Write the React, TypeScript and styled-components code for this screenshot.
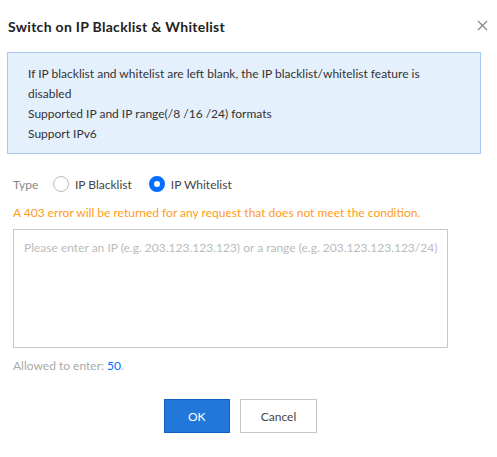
import { useState } from 'react'
import styled, { createGlobalStyle } from 'styled-components'

const GlobalStyle = createGlobalStyle`
  body {
    margin: 0;
    background: #fff;
    font-family: Lato, "Liberation Sans", sans-serif;
    font-size: 12px;
    color: #444;
  }
`

const Dialog = styled.div`
  position: relative;
  width: 497px;
  height: 457px;
  box-sizing: border-box;
  padding: 0 16px 0 7px;
`

const Header = styled.div`
  height: 52px;
  display: flex;
  align-items: center;
  padding-left: 1px;
`

const Title = styled.h2`
  margin: 0;
  font-size: 14px;
  font-weight: 700;
  letter-spacing: 0.3px;
  color: #222;
`

const Close = styled.button`
  position: absolute;
  top: 18px;
  right: 8px;
  width: 14px;
  height: 14px;
  padding: 0;
  border: 0;
  background: none;
  cursor: pointer;
  display: flex;
  align-items: center;
  justify-content: center;
`

const Notice = styled.div`
  width: 474px;
  box-sizing: border-box;
  background: #e5f0fd;
  border: 1px solid #a6c9f5;
  padding: 11px 20px 9px;
  line-height: 20px;
  color: #333;
`

const Form = styled.div`
  padding: 20px 0 0 6px;
`

const TypeRow = styled.div`
  display: flex;
  align-items: center;
  height: 20px;
`

const FieldLabel = styled.span`
  color: #888;
  width: 40px;
`

const RadioOption = styled.label`
  display: flex;
  align-items: center;
  gap: 6px;
  margin-right: 17px;
  color: #444;
  cursor: pointer;
`

const RadioDot = styled.span<{ $checked: boolean }>`
  width: 16px;
  height: 16px;
  box-sizing: border-box;
  border-radius: 50%;
  border: ${p => (p.$checked ? '5px solid #006eff' : '1px solid #bbb')};
  background: #fff;
`

const Warning = styled.div`
  margin-top: 9px;
  color: #ff9c19;
  line-height: 20px;
`

const TextArea = styled.textarea`
  display: block;
  margin-top: 6px;
  width: 435px;
  height: 119px;
  box-sizing: border-box;
  border: 1px solid #c8c8c8;
  padding: 8px 2px 8px 10px;
  font-family: inherit;
  font-size: 12px;
  line-height: 20px;
  resize: none;
  outline: none;

  &::placeholder {
    color: #bbb;
  }
`

const Hint = styled.div`
  margin-top: 8px;
  color: #aaa;
  line-height: 20px;
`

const Count = styled.span`
  color: #006eff;
`

const Footer = styled.div`
  display: flex;
  justify-content: center;
  gap: 10px;
  margin-top: 23px;
  width: 467px;
`

const Button = styled.button<{ $primary?: boolean }>`
  height: 34px;
  min-width: ${p => (p.$primary ? '66px' : '77px')};
  box-sizing: border-box;
  padding: 0 20px;
  font-family: inherit;
  font-size: 12px;
  cursor: pointer;
  border: 1px solid ${p => (p.$primary ? '#0f62c1' : '#c1c6cf')};
  background: ${p => (p.$primary ? '#2177da' : '#fff')};
  color: ${p => (p.$primary ? '#fff' : '#444')};
`

const App: React.FC = () => {
  const [type, setType] = useState<'black' | 'white'>('white')

  return (
    <>
      <GlobalStyle />
      <Dialog>
        <Header>
          <Title>Switch on IP Blacklist &amp; Whitelist</Title>
        </Header>
        <Close aria-label="close">
          <svg width="11" height="11" viewBox="0 0 11 11">
            <path d="M1 1L10 10M10 1L1 10" stroke="#888" strokeWidth="1.3" />
          </svg>
        </Close>
        <Notice>
          If IP blacklist and whitelist are left blank, the IP blacklist/whitelist feature is disabled
          <br />
          Supported IP and IP range(/8 /16 /24) formats
          <br />
          Support IPv6
        </Notice>
        <Form>
          <TypeRow>
            <FieldLabel>Type</FieldLabel>
            <RadioOption onClick={() => setType('black')}>
              <RadioDot $checked={type === 'black'} />
              IP Blacklist
            </RadioOption>
            <RadioOption onClick={() => setType('white')}>
              <RadioDot $checked={type === 'white'} />
              IP Whitelist
            </RadioOption>
          </TypeRow>
          <Warning>A 403 error will be returned for any request that does not meet the condition.</Warning>
          <TextArea placeholder="Please enter an IP (e.g. 203.123.123.123) or a range (e.g. 203.123.123.123/24)" />
          <Hint>
            Allowed to enter: <Count>50</Count>.
          </Hint>
        </Form>
        <Footer>
          <Button $primary>OK</Button>
          <Button>Cancel</Button>
        </Footer>
      </Dialog>
    </>
  )
}

export default App
